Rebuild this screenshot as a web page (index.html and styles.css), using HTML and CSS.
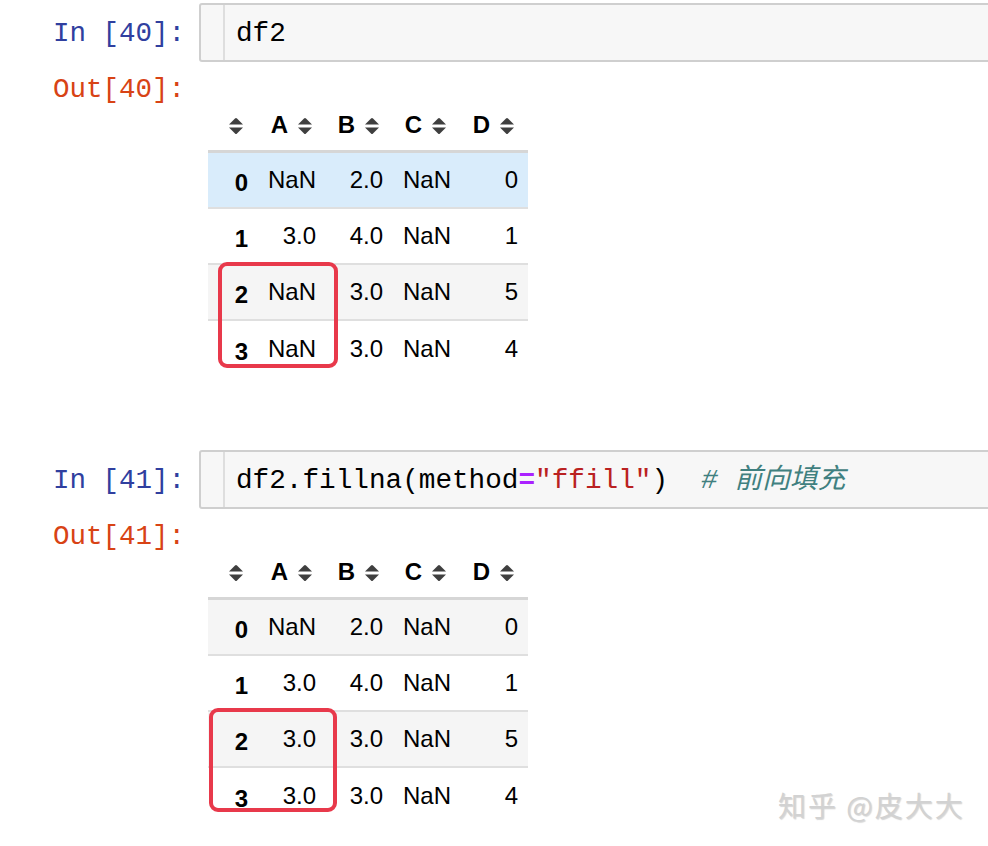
FILE: index.html
```html
<!DOCTYPE html>
<html lang="zh">
<head>
<meta charset="utf-8">
<title>df2.fillna</title>
<link rel="stylesheet" href="styles.css">
</head>
<body>
<svg width="0" height="0" class="defs">
  <defs>
    <symbol id="sort" viewBox="0 0 16 18">
      <path d="M1 7.6 L7 1.4 Q8 0.4 9 1.4 L15 7.6 Z" />
      <path d="M1 10.4 L7 16.6 Q8 17.6 9 16.6 L15 10.4 Z" />
    </symbol>
  </defs>
</svg>
<div class="notebook">
  <div class="cell">
    <div class="row input-row">
      <div class="prompt in">In&nbsp;[40]:</div>
      <div class="input-box">
        <div class="gutter"></div>
        <pre class="code">df2</pre>
      </div>
    </div>
    <div class="row output-row">
      <div class="prompt out">Out[40]:</div>
      <div class="table-wrap">
        <table class="df">
          <colgroup><col class="c0"><col class="c1"><col class="c2"><col class="c3"><col class="c4"></colgroup>
          <thead>
            <tr>
              <th><svg class="ico"><use href="#sort"/></svg></th>
              <th>A<svg class="ico"><use href="#sort"/></svg></th>
              <th>B<svg class="ico"><use href="#sort"/></svg></th>
              <th>C<svg class="ico"><use href="#sort"/></svg></th>
              <th>D<svg class="ico"><use href="#sort"/></svg></th>
            </tr>
          </thead>
          <tbody>
            <tr class="hover"><th>0</th><td>NaN</td><td>2.0</td><td>NaN</td><td>0</td></tr>
            <tr><th>1</th><td>3.0</td><td>4.0</td><td>NaN</td><td>1</td></tr>
            <tr class="odd"><th>2</th><td>NaN</td><td>3.0</td><td>NaN</td><td>5</td></tr>
            <tr class="last"><th>3</th><td>NaN</td><td>3.0</td><td>NaN</td><td>4</td></tr>
          </tbody>
        </table>
        <div class="mark mark1"></div>
      </div>
    </div>
  </div>

  <div class="cell cell2">
    <div class="row input-row">
      <div class="prompt in">In&nbsp;[41]:</div>
      <div class="input-box">
        <div class="gutter"></div>
        <pre class="code">df2.fillna(method<span class="op">=</span><span class="str">"ffill"</span>)  <span class="cm"># 前向填充</span></pre>
      </div>
    </div>
    <div class="row output-row">
      <div class="prompt out">Out[41]:</div>
      <div class="table-wrap">
        <table class="df">
          <colgroup><col class="c0"><col class="c1"><col class="c2"><col class="c3"><col class="c4"></colgroup>
          <thead>
            <tr>
              <th><svg class="ico"><use href="#sort"/></svg></th>
              <th>A<svg class="ico"><use href="#sort"/></svg></th>
              <th>B<svg class="ico"><use href="#sort"/></svg></th>
              <th>C<svg class="ico"><use href="#sort"/></svg></th>
              <th>D<svg class="ico"><use href="#sort"/></svg></th>
            </tr>
          </thead>
          <tbody>
            <tr class="odd"><th>0</th><td>NaN</td><td>2.0</td><td>NaN</td><td>0</td></tr>
            <tr><th>1</th><td>3.0</td><td>4.0</td><td>NaN</td><td>1</td></tr>
            <tr class="odd"><th>2</th><td>3.0</td><td>3.0</td><td>NaN</td><td>5</td></tr>
            <tr class="last"><th>3</th><td>3.0</td><td>3.0</td><td>NaN</td><td>4</td></tr>
          </tbody>
        </table>
        <div class="mark mark2"></div>
      </div>
    </div>
  </div>
</div>
<div class="watermark">知乎 @皮大大</div>
</body>
</html>
```

FILE: styles.css
```css
html, body {
  margin: 0;
  padding: 0;
  background: #ffffff;
  overflow: hidden;
}
body {
  width: 988px;
  height: 846px;
  position: relative;
  font-family: "Liberation Sans", Arial, "Noto Sans CJK SC", sans-serif;
}
.defs { position: absolute; }

.notebook {
  padding-top: 3px;
  width: 1020px;
}
.cell2 { margin-top: 73px; }

.row {
  display: flex;
  align-items: flex-start;
}

.prompt {
  width: 185px;
  flex: none;
  text-align: right;
  font-family: "Liberation Mono", "Courier New", monospace;
  font-size: 27.5px;
  line-height: 32px;
  margin-right: 14px;
  white-space: nowrap;
}
.prompt.in { color: #303F9F; margin-top: 15px; }
.prompt.out { color: #D84315; }

.input-box {
  flex: 1;
  height: 59px;
  box-sizing: border-box;
  display: flex;
  background: #f7f7f7;
  border: 2px solid #cfcfcf;
  border-radius: 3px;
}
.gutter {
  width: 22px;
  flex: none;
  border-right: 2px solid #dedede;
}
.code {
  margin: 0;
  padding: 1px 0 0 11px;
  font-family: "Liberation Mono", "Courier New", "Noto Sans CJK SC", monospace;
  font-size: 27.7px;
  line-height: 55px;
  color: #000;
  white-space: pre;
}
.code .op { color: #AA22FF; font-weight: bold; }
.code .str { color: #BA2121; }
.code .cm { color: #408080; font-style: italic; }

.output-row { padding-top: 12px; }
.table-wrap {
  position: relative;
  margin-top: 26px;
  margin-left: 9px;
}

.df {
  border-collapse: separate;
  border-spacing: 0;
  table-layout: fixed;
  width: 320px;
  font-size: 24px;
  color: #000;
}
.df col.c0 { width: 50px; }
.df col.c1 { width: 68px; }
.df col.c2 { width: 67px; }
.df col.c3 { width: 67px; }
.df col.c4 { width: 68px; }

.df thead th {
  box-sizing: border-box;
  height: 53px;
  padding: 0 13px 0 8px;
  text-align: right;
  vertical-align: middle;
  font-weight: bold;
  border-bottom: 3px solid #d6d6d6;
  white-space: nowrap;
  line-height: 24px;
}
.df thead th:first-child { padding-right: 14px; }
.ico {
  width: 16px;
  height: 18px;
  margin-left: 9px;
  vertical-align: -2px;
  fill: #3f3f3f;
}

.df tbody td,
.df tbody th {
  box-sizing: border-box;
  height: 56px;
  padding: 0 10px;
  text-align: right;
  vertical-align: middle;
  line-height: 26px;
  border-bottom: 2px solid #dfdfdf;
  white-space: nowrap;
}
.df tbody th {
  font-weight: bold;
  padding-top: 6px;
}
.df tbody tr.last td,
.df tbody tr.last th { border-bottom: none; }
.df tbody tr.odd td,
.df tbody tr.odd th { background: #f5f5f5; }
.df tbody tr.hover td,
.df tbody tr.hover th { background: #d9ecfb; }

.mark {
  position: absolute;
  box-sizing: border-box;
  border: 4px solid #e8394b;
  border-radius: 9px;
}
.mark1 { left: 10px; top: 162px; width: 120px; height: 106px; }
.mark2 { left: 1px; top: 161px; width: 128px; height: 104px; }

.watermark {
  position: absolute;
  left: 778px;
  top: 786px;
  font-family: "Noto Sans CJK SC", sans-serif;
  font-size: 28px;
  letter-spacing: 2px;
  line-height: 38px;
  color: #d2d2d2;
  text-shadow: 1px 1px 1px rgba(0,0,0,0.16);
  white-space: nowrap;
}
```
